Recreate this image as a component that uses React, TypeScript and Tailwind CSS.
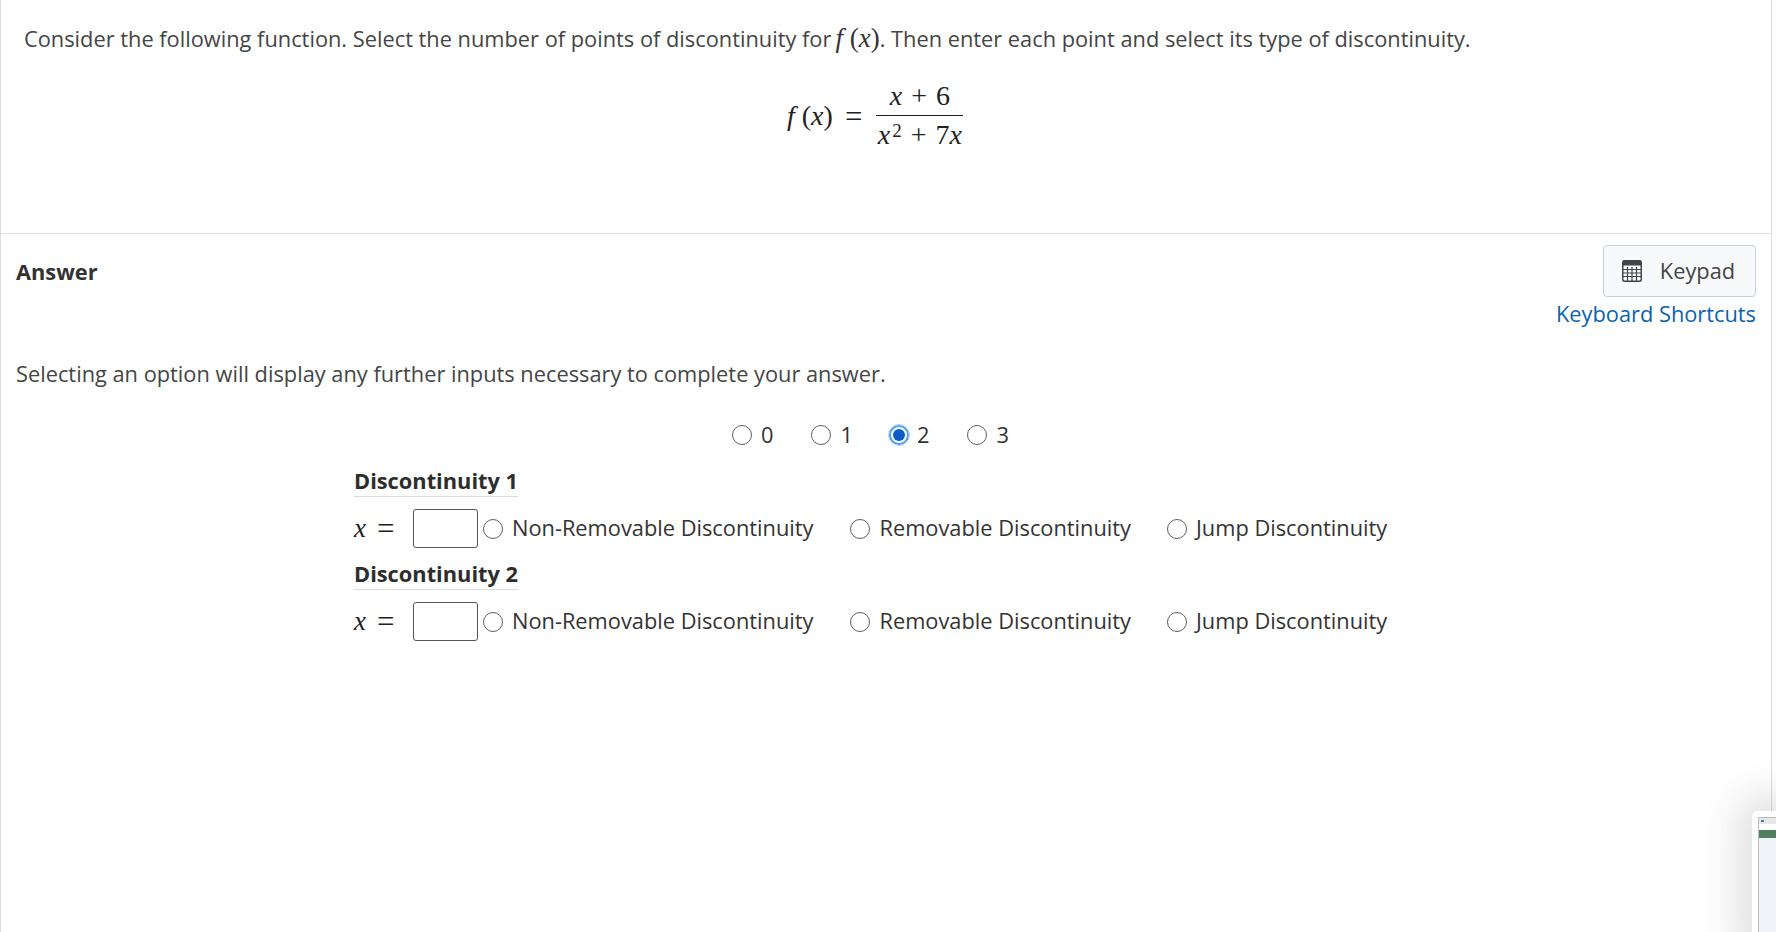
import React from "react";

const F = "font-['Liberation_Serif',serif]";

function Radio({ checked = false }: { checked?: boolean }) {
  if (checked) {
    return (
      <span className="flex h-[20px] w-[20px] shrink-0 items-center justify-center rounded-full border-2 border-[#4d9df0] bg-white outline outline-1 outline-[#a9d0f7]">
        <span className="h-[12px] w-[12px] rounded-full bg-[#0b5ccb]" />
      </span>
    );
  }
  return <span className="block h-[20px] w-[20px] shrink-0 rounded-full border-[1.5px] border-[#5f5f5f] bg-white" />;
}

function Option({ label, className = "" }: { label: string; className?: string }) {
  return (
    <label className={`flex items-center gap-[9px] ${className}`}>
      <Radio />
      <span className="whitespace-nowrap">{label}</span>
    </label>
  );
}

function Row({ title }: { title: string }) {
  return (
    <div className="flex flex-col">
      <div className="h-[31px] w-[164px] border-b border-[#dcdcdc] text-[21.8px] font-bold leading-[30px] text-[#2d2d2d] whitespace-nowrap">{title}</div>
      <div className="mt-[12px] flex h-[39px] items-center text-[21.8px] text-[#333]">
        <span className={`${F} flex w-[59px] items-center text-[27px] text-[#222]`}>
          <i>x</i>
          <span className="ml-[11px] text-[31px] leading-none">=</span>
        </span>
        <span className="h-[39px] w-[65px] shrink-0 rounded-[3px] border border-[#555] bg-white" />
        <Option label="Non-Removable Discontinuity" className="ml-[5px]" />
        <Option label="Removable Discontinuity" className="ml-[37px]" />
        <Option label="Jump Discontinuity" className="ml-[36px]" />
      </div>
    </div>
  );
}

function CalcIcon() {
  return (
    <svg width="20" height="22" viewBox="0 0 20 22" fill="none">
      <rect x="0.75" y="0.75" width="18.5" height="20.5" rx="1.5" stroke="#454545" strokeWidth="1.5" />
      <rect x="1" y="1" width="18" height="4.5" fill="#454545" />
      <path d="M1 9.5h18M1 13h18M1 16.5h18M5.5 7v14M10 7v14M14.5 7v14" stroke="#454545" strokeWidth="1.2" />
    </svg>
  );
}

export default function App() {
  return (
    <div className="relative h-[932px] w-full overflow-hidden bg-white font-['Open_Sans',sans-serif] text-[#454545]">
      <div className="mr-[4px] h-full border-x-[1.5px] border-[#dedede]">
        <section className="h-[234px] border-b-[1.5px] border-[#dedede] pt-[22px] pl-[23px]">
          <p className="flex items-baseline whitespace-pre text-[21.8px] leading-[32px]">
            Consider the following function. Select the number of points of discontinuity for
            <span className={`${F} ml-[4px] text-[27px] text-[#333]`}><i>f</i> (<i>x</i>)</span>. Then enter each point and select its type of discontinuity.
          </p>
          <div className={`${F} mt-[26px] ml-[763px] flex items-center text-[28px] text-[#222]`}>
            <span className="-mt-[2px] whitespace-pre"><i>f</i> (<i>x</i>)</span>
            <span className="ml-[12px] -mt-[1px] text-[31px] leading-none">=</span>
            <span className="ml-[14px] flex flex-col items-center">
              <span className="flex h-[35px] w-[87px] items-center justify-center border-b-[1.5px] border-[#222] pb-[4px]"><i>x</i><span className="mx-[9px]">+</span>6</span>
              <span className="flex h-[37px] items-center"><i>x</i><sup className="top-[-4px] ml-[2px] text-[19px] leading-none">2</sup><span className="mx-[9px]">+</span>7<i>x</i></span>
            </span>
          </div>
        </section>

        <section className="relative pl-[15px] pr-[15px]">
          <div className="flex items-start justify-between pt-[11px]">
            <h2 className="mt-[12px] text-[21.8px] font-bold leading-[30px] text-[#333]">Answer</h2>
            <div className="flex flex-col items-end">
              <button className="flex h-[52px] w-[153px] items-center justify-center gap-[18px] rounded-[4px] border border-[#c4d0da] bg-[#f7f9fb] pr-[2px] text-[21.8px] text-[#454545]">
                <CalcIcon />
                Keypad
              </button>
              <a className="mt-[1px] text-[21.8px] leading-[32px] text-[#0b63ae] whitespace-nowrap">Keyboard Shortcuts</a>
            </div>
          </div>
          <p className="mt-[28px] text-[21.8px] leading-[32px]">
            Selecting an option will display any further inputs necessary to complete your answer.
          </p>
          <div className="mt-[29px] ml-[716px] flex h-[32px] items-center text-[21.8px] text-[#333]">
            <Option label="0" />
            <Option label="1" className="ml-[38px]" />
            <label className="ml-[36px] flex items-center gap-[8px]"><Radio checked />2</label>
            <Option label="3" className="ml-[38px]" />
          </div>
          <div className="ml-[338px] mt-[15px] flex flex-col gap-[11px]">
            <Row title="Discontinuity 1" />
            <Row title="Discontinuity 2" />
          </div>
        </section>
      </div>

      <aside className="absolute left-[1752px] top-[811px] h-[140px] w-[40px] rounded-tl-[6px] bg-white p-[6px] shadow-[0_0_40px_14px_rgba(0,0,0,0.13)]">
        <div className="h-full border-l border-t border-[#bdbdbd] bg-[#f0f4f8]">
          <div className="flex h-[6px] items-center bg-[#e8e8e8] pl-[2px]"><span className="h-[2px] w-[3px] bg-[#5577bb]" /></div>
          <div className="h-[6px] bg-white" />
          <div className="h-[8px] bg-[#4f7f5c]" />
        </div>
      </aside>
    </div>
  );
}
